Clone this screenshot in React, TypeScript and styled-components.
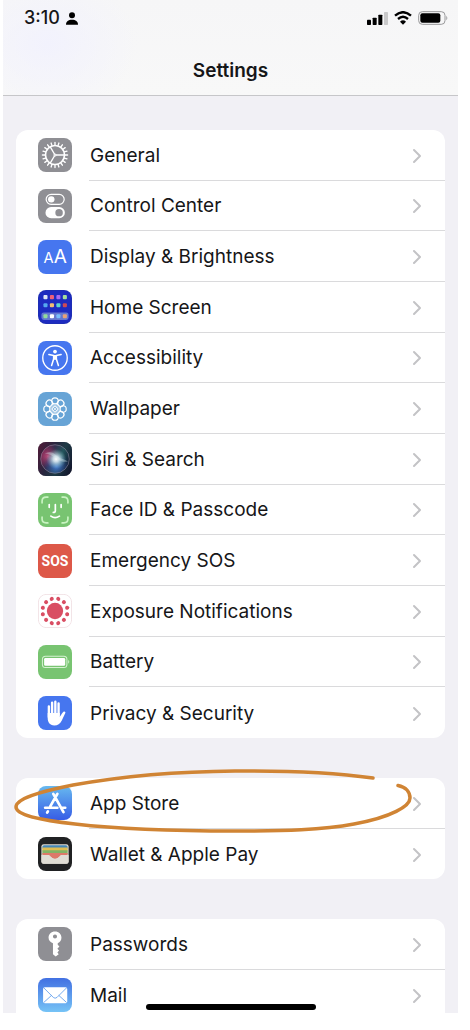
import React from 'react';
import styled, { createGlobalStyle } from 'styled-components';

const GlobalStyle = createGlobalStyle`
  *, *::before, *::after { box-sizing: border-box; }
  body {
    margin: 0;
    background: #ffffff;
    color: #161618;
    font-family: Inter, Roboto, "Liberation Sans", sans-serif;
    font-variation-settings: "opsz" 32;
  }
`;

const Screen = styled.div`
  position: relative;
  overflow: hidden;
  margin: 0 12px 0 3px;
  background: #f1f0f5;
`;

const Header = styled.header`
  height: 96px;
  border-bottom: 1px solid #c6c6c9;
  background:
    radial-gradient(ellipse 90px 70px at 45px 44px, #f2f2fd, rgba(246, 246, 250, 0)),
    linear-gradient(#f6f6f7, #f8f8f8);
`;

const StatusBar = styled.div`
  display: flex;
  align-items: center;
  height: 36px;
  padding: 0 10px 0 21px;
`;

const Time = styled.time`
  margin-right: 6px;
  font-size: 18px;
  line-height: 24px;
  font-weight: 500;
`;

const StatusIcons = styled.div`
  display: flex;
  align-items: center;
  gap: 6px;
  margin-left: auto;
`;

const Title = styled.h1`
  margin: 23px 0 0;
  font-size: 19px;
  line-height: 24px;
  font-weight: 600;
  text-align: center;
`;

const Groups = styled.main`
  display: flex;
  flex-direction: column;
  gap: 40px;
  padding: 34px 13px 0;
`;

const Group = styled.section<{ $cut?: boolean }>`
  position: relative;
  border-radius: ${(p) => (p.$cut ? '12px 12px 0 0' : '12px')};
  margin-bottom: ${(p) => (p.$cut ? '-7px' : '0')};
  background: #ffffff;
`;

const Rows = styled.ul<{ $minHeight: number }>`
  display: grid;
  grid-auto-rows: 1fr;
  min-height: ${(p) => p.$minHeight}px;
  margin: 0;
  padding: 0;
  list-style: none;
`;

const Row = styled.li`
  display: flex;
  &:not(:last-child) > a > span { border-bottom: 1px solid #dadadc; }
`;

const RowLink = styled.a`
  display: flex;
  flex: 1;
  align-items: center;
  gap: 17px;
  padding-left: 22px;
  color: inherit;
  text-decoration: none;
`;

const RowBody = styled.span`
  display: flex;
  flex: 1;
  align-self: stretch;
  align-items: center;
  justify-content: space-between;
  padding: 2px 23px 0 1px;
  font-size: 19px;
  line-height: 24px;
`;

const IconSvg = styled.svg`
  flex: none;
  width: 34px;
  height: 34px;
  border-radius: 8px;
`;

const Highlight = styled.svg`
  position: absolute;
  top: -10px;
  left: -2px;
  width: 400px;
  height: 66px;
  pointer-events: none;
`;

const HomeIndicator = styled.div`
  position: absolute;
  bottom: 3px;
  left: 50%;
  width: 170px;
  height: 6px;
  margin-left: -85px;
  border-radius: 3px;
  background: #000000;
`;

function Tile({ fill, children }: { fill: string; children: React.ReactNode }) {
  return (
    <IconSvg viewBox="0 0 100 100" aria-hidden="true">
      <rect width="100" height="100" fill={fill} />
      {children}
    </IconSvg>
  );
}

const around = (count: number, offset = 0) =>
  Array.from({ length: count }, (_, i) => offset + (i * 360) / count);

const icons: Record<string, React.ReactNode> = {
  general: (
    <Tile fill="#8f8f94">
      <g fill="none" stroke="#fff">
        <circle cx="50" cy="50" r="28" strokeWidth="5" />
        {around(20).map((a) => (
          <path key={a} d="M50 21V13" strokeWidth="4" strokeLinecap="round" transform={`rotate(${a} 50 50)`} />
        ))}
        <path d="M50 50H78M50 50L36 26M50 50L36 74" strokeWidth="4" />
        <circle cx="50" cy="50" r="3" fill="#8f8f94" strokeWidth="3" />
      </g>
    </Tile>
  ),
  control: (
    <Tile fill="#8f8f94">
      <rect x="24" y="16" width="53" height="29" rx="14.5" fill="none" stroke="#fff" strokeWidth="3.5" />
      <circle cx="39" cy="30.500" r="9.500" fill="#fff" />
      <rect x="22" y="53" width="57" height="33" rx="16.500" fill="#fff" />
      <circle cx="62" cy="69.500" r="11" fill="#8f8f94" />
    </Tile>
  ),
  display: (
    <Tile fill="#4676ef">
      <g fill="#fff" fontFamily="Inter, sans-serif">
        <text x="16" y="69" fontSize="43">A</text>
        <text x="46" y="69" fontSize="56">A</text>
      </g>
    </Tile>
  ),
  home: (
    <Tile fill="#1e2eb4">
      <rect x="3" y="3" width="94" height="94" rx="20" fill="#1d2bc0" />
      <rect x="10" y="66" width="80" height="22" rx="7" fill="#6477cf" />
      {[
        ['#dfe6f5', '#ee6079', '#a569f2', '#a6df9c'],
        ['#55a9f0', '#f1bd74', '#5bd4cf', '#cc4a55'],
        ['#93dc9b', '#ffffff', '#78bdfa', '#e8a177'],
      ].map((line, r) =>
        line.map((c, i) => (
          <rect key={c} x={16 + i * 19} y={[15, 39, 71][r]} width="12" height="12" rx="3" fill={c} />
        )),
      )}
    </Tile>
  ),
  accessibility: (
    <Tile fill="#4676ef">
      <circle cx="50" cy="50" r="36" fill="none" stroke="#fff" strokeWidth="4" />
      <circle cx="50" cy="31" r="5.500" fill="#fff" />
      <path d="M32 40L46 43V53L40 72M68 40L54 43V53L60 72" fill="none" stroke="#fff" strokeWidth="4.500" strokeLinecap="round" strokeLinejoin="round" />
      <path d="M45 41H55V55H45Z" fill="#fff" />
    </Tile>
  ),
  wallpaper: (
    <Tile fill="#67a4d6">
      <g fill="none" stroke="#fff" strokeWidth="3.500">
        {around(8).map((a) => (
          <ellipse key={a} cx="50" cy="26" rx="9.500" ry="9" transform={`rotate(${a} 50 50)`} />
        ))}
        {around(8).map((a) => (
          <path key={a} d="M50 44L45 34M50 44L55 34" strokeWidth="2" transform={`rotate(${a} 50 50)`} />
        ))}
        <circle cx="50" cy="50" r="7" strokeWidth="2.500" />
      </g>
      <circle cx="50" cy="50" r="3" fill="#fff" />
    </Tile>
  ),
  siri: (
    <IconSvg viewBox="0 0 100 100" aria-hidden="true">
      <defs>
        <linearGradient id="siriBase" x1="0" y1="0.300" x2="1" y2="0.700">
          <stop offset="0" stopColor="#6c2146" />
          <stop offset="0.350" stopColor="#34304f" />
          <stop offset="0.650" stopColor="#23545b" />
          <stop offset="1" stopColor="#101a33" />
        </linearGradient>
        <radialGradient id="siriBlue" cx="0.550" cy="0.750" r="0.450">
          <stop offset="0" stopColor="#477bd6" />
          <stop offset="1" stopColor="#29418f" stopOpacity="0" />
        </radialGradient>
        <radialGradient id="siriPink" cx="0.250" cy="0.400" r="0.400">
          <stop offset="0" stopColor="#bf4d7d" />
          <stop offset="1" stopColor="#8a2d5c" stopOpacity="0" />
        </radialGradient>
        <radialGradient id="siriGlow" cx="0.540" cy="0.500" r="0.350">
          <stop offset="0" stopColor="#ffffff" />
          <stop offset="0.300" stopColor="#d5e6ee" stopOpacity="0.900" />
          <stop offset="1" stopColor="#74b8bd" stopOpacity="0" />
        </radialGradient>
      </defs>
      <rect width="100" height="100" fill="#171626" />
      <rect width="100" height="100" fill="url(#siriBase)" opacity="0.600" />
      <circle cx="50" cy="50" r="42" fill="url(#siriBase)" />
      <circle cx="50" cy="50" r="42" fill="url(#siriPink)" />
      <circle cx="50" cy="50" r="42" fill="url(#siriBlue)" />
      <circle cx="50" cy="50" r="42" fill="url(#siriGlow)" />
      <path d="M20 34C38 36 44 43 54 49S77 61 88 57C74 49 66 49 59 44S43 22 20 34Z" fill="#dcf1f3" opacity="0.350" />
      <circle cx="50" cy="50" r="42" fill="none" stroke="#9a91a9" strokeWidth="2" opacity="0.750" />
    </IconSvg>
  ),
  face: (
    <Tile fill="#78c471">
      <g fill="none" stroke="#c9f3c2" strokeWidth="5" strokeLinecap="round">
        <path d="M12 29V24Q12 12 24 12H29M71 12H76Q88 12 88 24V29M88 71V76Q88 88 76 88H71M29 88H24Q12 88 12 76V71" />
      </g>
      <g fill="none" stroke="#fff" strokeWidth="5" strokeLinecap="round">
        <path d="M33 34V42M68 34V42M51 34V52Q51 57 45 57M38 68Q50 77 63 68" />
      </g>
    </Tile>
  ),
  sos: (
    <Tile fill="#dd5848">
      <text x="50" y="65" fill="#fff" fontFamily="Roboto, sans-serif" fontSize="41" fontWeight="700" textAnchor="middle">SOS</text>
    </Tile>
  ),
  exposure: (
    <IconSvg viewBox="0 0 100 100" aria-hidden="true">
      <rect x="1" y="1" width="98" height="98" rx="23" fill="#fff" stroke="#edd9de" strokeWidth="2.500" />
      <circle cx="50" cy="50" r="24" fill="#d94e63" />
      {around(12, 15).map((a) => (
        <circle key={a} cx="50" cy="13" r="6" fill="#d94e63" transform={`rotate(${a} 50 50)`} />
      ))}
    </IconSvg>
  ),
  battery: (
    <Tile fill="#78c471">
      <rect x="13" y="33" width="72" height="33" rx="9" fill="none" stroke="#d5f2d1" strokeWidth="3" />
      <rect x="18" y="38" width="62" height="23" rx="4" fill="#fff" />
      <path d="M89 44Q95 49 89 55Z" fill="#d5f2d1" />
    </Tile>
  ),
  privacy: (
    <Tile fill="#4676ef">
      <g fill="none" stroke="#fff" strokeWidth="7" strokeLinecap="round">
        <path d="M32 31V62M41.500 20V55M51 17V55M60.500 22V56" />
      </g>
      <path d="M28.500 50H64V61C68 57 71 48 75 46C79 44 82 47 80 51L70 72C65 82 58 87 48 87C34 87 28.500 76 28.500 65Z" fill="#fff" />
    </Tile>
  ),
  store: (
    <IconSvg viewBox="0 0 100 100" aria-hidden="true">
      <defs>
        <linearGradient id="storeFill" x1="0" y1="0" x2="0" y2="1">
          <stop offset="0" stopColor="#67b9ef" />
          <stop offset="1" stopColor="#365ce6" />
        </linearGradient>
      </defs>
      <rect width="100" height="100" fill="url(#storeFill)" />
      <g fill="none" stroke="#fff" strokeWidth="8" strokeLinecap="round">
        <path d="M57 23L36 60M45 23L75 77M21 64H57M70 64H80M29 75L27 78" />
      </g>
    </IconSvg>
  ),
  wallet: (
    <Tile fill="#202123">
      <rect x="10" y="21" width="80" height="58" rx="7" fill="#e0ddd5" />
      <path d="M13 34V29Q13 24 18 24H82Q87 24 87 29V34Z" fill="#4587b7" />
      <path d="M13 31H87V43H13Z" fill="#dfbc51" />
      <path d="M13 39H87V50H13Z" fill="#82b365" />
      <path d="M13 47H87V57H66Q62 65 50 65T34 57H13Z" fill="#dd7969" />
      <path d="M10 53H31Q35 53 38 57Q43 63 50 63T62 57Q65 53 69 53H90V73Q90 79 84 79H16Q10 79 10 73Z" fill="#e0ddd5" />
      <path d="M32 53H68Q65 53 62 57Q57 63 50 63T38 57Q35 53 32 53Z" fill="#dd7969" />
    </Tile>
  ),
  passwords: (
    <Tile fill="#8f8f94">
      <path fillRule="evenodd" d="M50 13C61 13 69 21 69 31C69 39 65 45 58 48V52L63 57L57 64L62 69L57 75L61 80L52 87L44 80V48C36 45 31 39 31 31C31 21 39 13 50 13ZM50 22A6 6 0 1 0 50 34A6 6 0 1 0 50 22Z" fill="#fff" />
    </Tile>
  ),
  mail: (
    <IconSvg viewBox="0 0 100 100" aria-hidden="true">
      <defs>
        <linearGradient id="mailFill" x1="0" y1="0" x2="0" y2="1">
          <stop offset="0" stopColor="#4270e2" />
          <stop offset="1" stopColor="#76c3f6" />
        </linearGradient>
      </defs>
      <rect width="100" height="100" fill="url(#mailFill)" />
      <rect x="15" y="27" width="71" height="47" rx="5" fill="#fff" />
      <path d="M17 29L45 57Q50 62 56 57L84 29M17 72L40 51M84 72L61 51" fill="none" stroke="#5d9cec" strokeWidth="2.500" />
    </IconSvg>
  ),
};

type Item = [id: string, label: string];

const systemItems: Item[] = [
  ['general', 'General'],
  ['control', 'Control Center'],
  ['display', 'Display & Brightness'],
  ['home', 'Home Screen'],
  ['accessibility', 'Accessibility'],
  ['wallpaper', 'Wallpaper'],
  ['siri', 'Siri & Search'],
  ['face', 'Face ID & Passcode'],
  ['sos', 'Emergency SOS'],
  ['exposure', 'Exposure Notifications'],
  ['battery', 'Battery'],
  ['privacy', 'Privacy & Security'],
];

const storeItems: Item[] = [
  ['store', 'App Store'],
  ['wallet', 'Wallet & Apple Pay'],
];

const accountItems: Item[] = [
  ['passwords', 'Passwords'],
  ['mail', 'Mail'],
];

function SettingsRows({ items, minHeight }: { items: Item[]; minHeight: number }) {
  return (
    <Rows $minHeight={minHeight}>
      {items.map(([id, label]) => (
        <Row key={id}>
          <RowLink href={`#${id}`}>
            {icons[id]}
            <RowBody>
              {label}
              <svg width="10" height="16" viewBox="0 0 10 16" fill="none" aria-hidden="true">
                <path d="M2 2L8 8L2 14" stroke="#c3c3c6" strokeWidth="2" strokeLinecap="round" strokeLinejoin="round" />
              </svg>
            </RowBody>
          </RowLink>
        </Row>
      ))}
    </Rows>
  );
}

export default function App() {
  return (
    <>
      <GlobalStyle />
      <Screen>
        <Header>
          <StatusBar>
            <Time>3:10</Time>
            <svg width="12" height="13" viewBox="0 0 36 39" aria-hidden="true">
              <circle cx="18" cy="10" r="9" />
              <path d="M0 38C0 28 7 23 18 23S36 28 36 38Z" />
            </svg>
            <StatusIcons>
              <svg width="21" height="13" viewBox="0 0 63 39" role="img" aria-label="Signal">
                <rect x="0" y="23" width="12" height="16" rx="2" />
                <rect x="17" y="17" width="12" height="22" rx="2" />
                <rect x="34" y="8" width="12" height="31" rx="2" />
                <rect x="51" y="0" width="12" height="39" rx="2" fill="#c9c9ca" />
              </svg>
              <svg width="18" height="14" viewBox="0 0 54 42" role="img" aria-label="Wi-Fi">
                <path d="M3 14Q27 -7 51 14M12 24Q27 11 42 24" fill="none" stroke="#000" strokeWidth="7" />
                <path d="M18 32Q27 24 36 32L27 41Z" />
              </svg>
              <svg width="30" height="14" viewBox="0 0 90 42" role="img" aria-label="Battery">
                <rect x="2" y="2" width="79" height="38" rx="11" fill="none" stroke="#98989a" strokeWidth="3" />
                <rect x="7" y="7" width="60" height="28" rx="6" />
                <path d="M85 14Q91 21 85 28Z" fill="#98989a" />
              </svg>
            </StatusIcons>
          </StatusBar>
          <Title>Settings</Title>
        </Header>
        <Groups>
          <Group>
            <SettingsRows items={systemItems} minHeight={608} />
          </Group>
          <Group>
            <SettingsRows items={storeItems} minHeight={101} />
            <Highlight viewBox="14 768 400 66" aria-hidden="true">
              <path
                d="M373 778C330 772 280 770.500 235 771C175 771.500 118 777 73 785C38 792 16 799 16 807C16 815 40 820 75 824C118 829 180 831 235 831C285 831 322 830 354 824C392 817 410 806 410 798C410 792 406 787 398 785.500"
                fill="none"
                stroke="#d08434"
                strokeWidth="3.500"
                strokeLinecap="round"
              />
            </Highlight>
          </Group>
          <Group $cut>
            <SettingsRows items={accountItems} minHeight={101} />
          </Group>
        </Groups>
        <HomeIndicator />
      </Screen>
    </>
  );
}
